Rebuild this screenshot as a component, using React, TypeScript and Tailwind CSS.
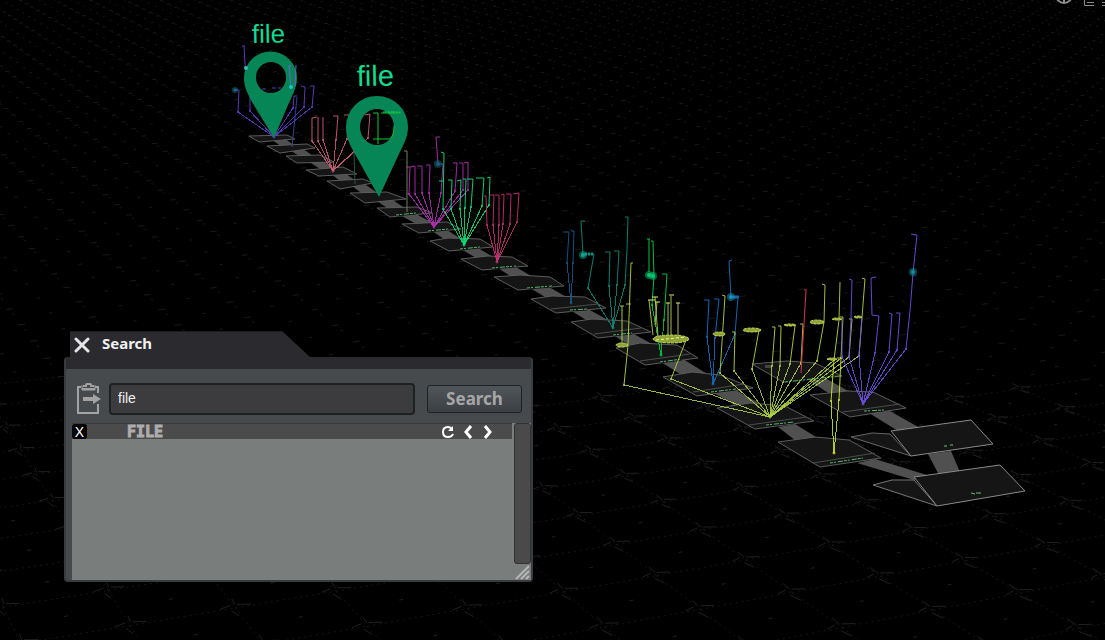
import { useState } from 'react';

type Point = [number, number];

interface Tree {
  color: string;
  root: Point;
  // each branch goes from the root outwards
  branches: Point[][];
}

interface Platform {
  points: string;
  label?: string;
}

const PLATFORMS: Platform[] = [
  { points: '249,136 287,135 295,139 259,142' },
  { points: '267,146 307,144 315,148 280,153' },
  { points: '286,156 320,155 334,162 297,163' },
  { points: '306,170 343,167 357,174 319,176' },
  { points: '327,181 363,179 373,183 340,189' },
  { points: '350,193 387,192 406,199 365,203' },
  { points: '377,208 417,207 432,213 390,217', label: 'M396,215 L416,213' },
  { points: '402,224 447,222 461,229 419,233', label: 'M428,231 L448,229' },
  { points: '430,241 448,238 480,239 493,247 449,251', label: 'M460,249 L480,247' },
  { points: '461,259 488,256 512,257 528,266 482,270', label: 'M492,268 L516,266' },
  { points: '494,277 520,275 550,277 564,286 518,290', label: 'M527,288 L552,286' },
  { points: '531,299 552,296 585,297 606,308 556,313', label: 'M570,310 L587,309' },
  { points: '571,322 592,319 627,321 651,332 598,338', label: 'M613,335 L632,333' },
  { points: '616,348 640,343 677,345 698,358 645,365', label: 'M660,362 L682,359' },
  { points: '663,377 692,372 720,375 753,388 697,396', label: 'M711,392 L736,389' },
  { points: '752,364 787,361 815,363 842,376 783,382', label: 'M785,382 L839,376' },
  { points: '717,408 750,403 785,406 814,421 755,429', label: 'M766,425 L794,422' },
  { points: '810,395 847,391 873,392 906,408 850,417', label: 'M864,411 L884,410' },
  { points: '778,442 815,437 849,440 881,458 820,467', label: 'M830,463 L863,458' },
];

const LINKS = [
  '271,139 284,138 299,149 286,150',
  '290,150 303,149 319,160 306,161',
  '308,161 321,160 340,172 326,173',
  '330,173 343,172 362,185 346,186',
  '352,186 366,185 385,198 369,199',
  '374,199 390,198 412,213 396,214',
  '400,215 416,214 444,229 427,230',
  '432,231 447,230 472,246 456,247',
  '461,249 478,248 505,264 488,265',
  '496,267 514,266 545,284 525,285',
  '530,288 549,287 582,306 562,307',
  '570,310 588,309 626,330 604,331',
  '613,335 632,333 672,355 649,357',
  '661,362 683,359 725,385 702,388',
  '714,393 734,389 785,418 762,421',
  '778,427 795,424 824,442 800,444',
  '810,381 825,378 850,392 830,394',
  '869,413 890,411 920,428 898,431',
  '857,463 875,459 930,476 914,480',
  '928,454 951,451 960,472 939,475',
];

const TREES: Tree[] = [
  {
    color: '#6140c8',
    root: [274, 137],
    branches: [
      [[238, 112], [239, 90], [234, 90]],
      [[250, 111], [250, 89]],
      [[293, 108], [294, 96], [297, 96]],
      [[304, 107], [305, 87], [301, 86]],
      [[312, 107], [314, 86], [310, 86]],
    ],
  },
  {
    color: '#cc6079',
    root: [333, 171],
    branches: [
      [[312, 141], [312, 118], [317, 117]],
      [[318, 141], [318, 117]],
      [[323, 140], [323, 117]],
      [[336, 140], [338, 116], [333, 116]],
      [[347, 139], [349, 115], [344, 115]],
      [[354, 152]],
      [[368, 138], [370, 114], [365, 115]],
    ],
  },
  {
    color: '#ae30b2',
    root: [434, 227],
    branches: [
      [[409, 194], [410, 167], [406, 167]],
      [[415, 194], [415, 166], [410, 167]],
      [[422, 193], [422, 166], [417, 166]],
      [[429, 193], [430, 165], [426, 165]],
      [[441, 193], [443, 164], [438, 164], [436, 137], [440, 137]],
      [[455, 191], [457, 163], [453, 163]],
      [[463, 190], [463, 163], [459, 163]],
      [[468, 190], [468, 162], [464, 163]],
    ],
  },
  {
    color: '#12e07a',
    root: [464, 245],
    branches: [
      [[443, 209], [444, 153], [441, 152]],
      [[451, 209], [452, 180], [448, 180]],
      [[460, 209], [461, 180], [457, 181]],
      [[465, 208], [466, 179], [463, 179]],
      [[471, 207], [473, 179], [467, 179]],
      [[482, 206], [484, 178], [476, 178]],
      [[489, 205], [490, 177], [487, 178]],
    ],
  },
  {
    color: '#c43273',
    root: [497, 262],
    branches: [
      [[487, 225], [486, 196], [484, 196]],
      [[493, 225], [494, 195], [489, 195]],
      [[499, 225], [499, 195], [495, 195]],
      [[503, 224], [504, 194], [501, 195]],
      [[510, 224], [511, 194], [506, 194]],
      [[517, 222], [519, 193], [513, 194]],
    ],
  },
  {
    color: '#17598a',
    root: [571, 303],
    branches: [
      [[567, 263], [569, 232], [563, 232]],
      [[573, 263], [574, 231], [571, 231]],
    ],
  },
  {
    color: '#0e8a78',
    root: [613, 328],
    branches: [
      [[588, 288], [594, 254], [583, 254], [581, 221], [585, 221]],
      [[609, 286], [610, 252], [605, 252]],
      [[617, 285], [619, 251], [614, 251]],
      [[625, 285], [627, 250], [628, 217], [625, 217]],
    ],
  },
  {
    color: '#00cf4a',
    root: [661, 355],
    branches: [
      [[652, 305], [654, 276], [653, 241], [651, 241]],
      [[664, 320], [667, 274], [662, 274]],
    ],
  },
  {
    color: '#1470c4',
    root: [713, 384],
    branches: [
      [[707, 337], [709, 300], [704, 300]],
      [[715, 338], [719, 299], [714, 299]],
      [[735, 334], [738, 297], [731, 297], [729, 261], [732, 260]],
    ],
  },
  {
    color: '#b0d446',
    root: [770, 417],
    branches: [
      [[624, 385], [628, 345], [631, 263], [633, 263]],
      [[671, 379], [686, 340]],
      [[720, 373], [725, 296], [722, 295]],
      [[734, 371], [735, 332], [732, 332]],
      [[752, 369], [759, 330]],
      [[772, 366], [775, 327], [772, 327]],
      [[780, 366], [781, 326], [778, 326]],
      [[790, 364], [795, 326]],
      [[801, 363], [803, 324], [800, 324]],
      [[817, 361], [824, 322], [825, 285], [822, 284]],
      [[834, 360], [839, 320], [840, 282]],
      [[841, 358], [843, 317], [840, 317]],
      [[849, 357], [852, 319], [849, 319]],
      [[859, 356], [862, 317], [865, 279], [862, 278]],
    ],
  },
  {
    color: '#d2ea26',
    root: [834, 453],
    branches: [
      [[831, 401], [834, 360], [827, 359]],
      [[839, 400], [841, 358], [837, 358]],
    ],
  },
  {
    color: '#6f50e0',
    root: [863, 404],
    branches: [
      [[842, 357], [842, 318]],
      [[849, 357], [851, 318], [852, 280], [849, 279]],
      [[859, 356], [862, 318]],
      [[875, 353], [879, 316], [872, 315], [871, 278], [876, 277]],
      [[889, 352], [892, 314], [889, 313]],
      [[897, 350], [900, 313], [896, 313]],
      [[906, 349], [910, 311], [913, 273], [917, 235], [911, 234]],
    ],
  },
];

// free standing poles, no root
const POLES = [
  { d: 'M404 151 H407 V212', color: '#71825a' },
  { d: 'M354 150 L355 184', color: '#25564a' },
  { d: 'M297 97 L292 147', color: '#343f99' },
  { d: 'M244 46 L246 80 M242 46 H245', color: '#5a3ab8' },
  { d: 'M649 239 V272 M647 239 H650', color: '#00bf45' },
  { d: 'M439 181 H444', color: '#12cc70' },
  { d: 'M622 306 V345 M620 306 H624 M626 304 H631', color: '#a2c443' },
  { d: 'M649 300 L653 335 M655 297 L658 337 M657 302 L655 325 M668 303 V341 M671 296 V337 M678 303 V339', color: '#a5bb50' },
  { d: 'M648 300 H655 M652 297 H658 M655 302 H660 M666 303 H670 M669 295 H674 M676 303 H680', color: '#d8f070' },
  { d: 'M806 291 L801 373 M804 290 H807', color: '#d73356' },
];

const DISCS = [
  { x: 622, y: 345, rx: 6, ry: 2 },
  { x: 671, y: 339, rx: 18, ry: 4 },
  { x: 719, y: 334, rx: 6, ry: 2 },
  { x: 752, y: 330, rx: 9, ry: 2 },
  { x: 790, y: 325, rx: 6, ry: 1 },
  { x: 817, y: 322, rx: 7, ry: 2 },
  { x: 837, y: 319, rx: 5, ry: 1 },
  { x: 858, y: 317, rx: 4, ry: 1 },
  { x: 832, y: 359, rx: 5, ry: 1 },
];

const SPARKS = [
  { x: 235, y: 90, r: 2, color: '#147c92' },
  { x: 438, y: 164, r: 3, color: '#176079' },
  { x: 583, y: 255, r: 3, color: '#12aa94' },
  { x: 649, y: 275, r: 3, color: '#08c771' },
  { x: 653, y: 276, r: 3, color: '#08c771' },
  { x: 731, y: 297, r: 3, color: '#1497bd' },
  { x: 913, y: 272, r: 3, color: '#138b99' },
];

// Projects a floor grid coordinate to the screen
function project(i: number, j: number): Point | null {
  const w = 1 + 0.0184 * i - 0.0372 * j;
  if (w < 0.3) return null;
  return [(832 + 99.7 * i + 15.8 * j) / w, (545 - 4.7 * i + 9.8 * j) / w];
}

function segment(a: Point | null, b: Point | null) {
  if (!a || !b) return '';
  return `M${a[0].toFixed(1)} ${a[1].toFixed(1)}L${b[0].toFixed(1)} ${b[1].toFixed(1)}`;
}

function Floor() {
  let lines = '';
  let marks = '';
  let far = '';
  for (let i = -14; i < 38; i++) {
    for (let j = -64; j < 12; j++) {
      const p = project(i, j);
      if (!p || p[0] < -90 || p[0] > 1200 || p[1] < -20 || p[1] > 700) continue;
      if (p[1] > 380) {
        lines += segment(p, project(i + 1, j)) + segment(p, project(i, j + 1));
        marks += segment(project(i - 0.14, j - 0.03), project(i - 0.03, j - 0.08));
        marks += segment(project(i + 0.04, j - 0.08), project(i + 0.16, j - 0.03));
        marks += segment(project(i - 0.05, j + 0.06), project(i - 0.02, j + 0.22));
        marks += segment(project(i + 0.03, j - 0.25), project(i + 0.02, j - 0.08));
        marks += segment(project(i + 0.48, j + 0.5), project(i + 0.52, j + 0.5));
      } else {
        far += segment(project(i - 0.04, j), project(i + 0.06, j));
        far += segment(project(i + 0.48, j + 0.5), project(i + 0.53, j + 0.5));
        far += segment(project(i, j + 0.3), project(i + 0.02, j + 0.35));
      }
    }
  }
  return (
    <g fill="none">
      <path d={lines} stroke="#161616" strokeDasharray="2 4" />
      <path d={marks} stroke="#202020" />
      <path d={far} stroke="#191919" />
    </g>
  );
}

function TreeShape({ tree }: { tree: Tree }) {
  return (
    <g stroke={tree.color} fill="none">
      {tree.branches.map((branch, index) => {
        const kink = branch[0];
        return (
          <g key={index}>
            <path d={`M${tree.root} L${kink}`} shapeRendering="crispEdges" strokeOpacity="0.85" />
            <polyline points={branch.map((p) => p.join(',')).join(' ')} strokeOpacity="0.9" />
            <circle cx={kink[0]} cy={kink[1]} r="1" fill={tree.color} stroke="none" />
          </g>
        );
      })}
      <circle cx={tree.root[0]} cy={tree.root[1]} r="1" />
    </g>
  );
}

function Scene() {
  return (
    <svg
      className="absolute inset-0 h-full w-full"
      viewBox="0 0 1105 640"
      preserveAspectRatio="xMinYMin slice"
      aria-label="File system map"
    >
      <Floor />

      <g fill="#505050">
        {LINKS.map((points) => (
          <polygon key={points} points={points} />
        ))}
      </g>

      {PLATFORMS.map(({ points, label }) => (
        <g key={points}>
          <polygon points={points} fill="#151515" stroke="#5c5c5c" />
          {label && (
            <>
              <path d={label} stroke="#151515" strokeWidth="3" />
              <path d={label} stroke="#55b66c" strokeDasharray="3 1 2 2 5 1" />
            </>
          )}
        </g>
      ))}
      <g stroke="#4c4c4c">
        <path d="M813 463 L875 453 M843 412 L900 404 M749 425 L806 417 M693 392 L744 384 M640 361 L690 354 M594 334 L641 328 M551 309 L598 304" />
      </g>

      <g fill="#151515" stroke="#8a8a8a">
        <polygon points="851,437 872,433 890,434 911,456" stroke="#666666" />
        <polygon points="891,431 971,420 993,444 911,456" />
        <polygon points="873,485 892,480 914,480 937,506" stroke="#777777" />
        <polygon points="914,477 1000,465 1025,491 937,506" />
      </g>
      <g stroke="#62c578" fill="none">
        <path d="M944 446 L947 446 M950 445 L953 445" />
        <path d="M971 493 L975 494 M976 493 L981 493" />
      </g>
      <rect x="765" y="365" width="6" height="3" fill="#444444" />

      {TREES.map((tree) => (
        <TreeShape key={tree.color} tree={tree} />
      ))}
      {POLES.map((pole) => (
        <path key={pole.d} d={pole.d} stroke={pole.color} fill="none" />
      ))}
      <g fill="#8fa336" stroke="#c5dd5a" strokeDasharray="3 1">
        {DISCS.map((disc) => (
          <ellipse key={disc.x} cx={disc.x} cy={disc.y} rx={disc.rx} ry={disc.ry} />
        ))}
      </g>
      <path d="M656 340 L686 337" stroke="#eaf7a0" strokeDasharray="3 2" />
      <path d="M585 254 H594" stroke="#12907e" strokeWidth="3" strokeDasharray="2 1" />
      <path d="M733 297 H739" stroke="#1767ae" strokeWidth="3" />
      {SPARKS.map((spark) => (
        <g key={spark.x} fill={spark.color}>
          <circle cx={spark.x} cy={spark.y} r={spark.r + 1} fillOpacity="0.5" />
          <circle cx={spark.x} cy={spark.y} r={spark.r - 1} />
        </g>
      ))}

      <g fill="#068657" fillRule="evenodd">
        <path d="M244 78 A26.5 26.5 0 0 1 297 78 C297 88 291 98 288 105 L274 138 L252 102 C248 94 244 87 244 78 Z M256 77.500 A15 15.500 0 0 0 286 77.500 A15 15.500 0 0 0 256 77.500 Z" />
        <path d="M346 127 A31 31 0 0 1 408 127 C408 138 402 147 398 156 L379 197 L355 154 C350 145 346 138 346 127 Z M360 127 A17 18 0 0 0 394 127 A17 18 0 0 0 360 127 Z" />
      </g>
      <g fill="none">
        <path d="M289 66 L291 87 M288 66 H291 M296 65 L295 86" stroke="#6a62c8" />
        <path d="M262 89 H268 M272 88 H281" stroke="#5a3ab8" strokeDasharray="4 2" />
        <path d="M378 144 L378 113 H373 M381 113 H401 M394 126 C394 134 392 139 388 139 H373" stroke="#12c42b" />
        <path d="M383 112 H400" stroke="#12d85e" strokeDasharray="4 1 2 1" />
      </g>
      <circle cx="246" cy="68" r="2" fill="#38bbba" />
      <circle cx="291" cy="87" r="2" fill="#19c6c2" />

      <g fill="#0fdc91" className="font-['Liberation_Sans',sans-serif]">
        <text x="252" y="43" fontSize="26" transform="rotate(-1 252 43)">
          file
        </text>
        <text x="357" y="86" fontSize="29" transform="rotate(-1 357 86)">
          file
        </text>
      </g>

      <g stroke="#8c8c8c" fill="none">
        <circle cx="1064" cy="-5" r="8" strokeWidth="2" />
        <path d="M1064 -4 V3" strokeWidth="2" />
        <path d="M1094 5.500 H1084.500 V0 M1094 2.500 H1087 M1105 5.500 H1102 M1105 2.500 H1102" />
      </g>
    </svg>
  );
}

function ClipboardIcon() {
  return (
    <svg viewBox="0 0 24 32" className="h-8 w-6 shrink-0" fill="none" stroke="#a3a3a3" strokeWidth="2" aria-hidden="true">
      <path d="M4 4 H1 V30 H21 V21 M18 4 H21 V10" />
      <path d="M5 2 V7 H18 V2" strokeWidth="1" />
      <path d="M5 6 H18" />
      <path d="M6 3 H9 V2 Q9 1 10 1 H13 Q14 1 14 2 V3 H17" />
      <path d="M6 16 H17" strokeWidth="4" />
      <path d="M16 11 L24 16 L16 21 Z" fill="#a3a3a3" stroke="none" />
    </svg>
  );
}

function SearchWindow() {
  const [query, setQuery] = useState('file');

  return (
    <section className="absolute left-16 top-[331px] w-[469px] font-['Noto_Sans','Open_Sans',sans-serif]">
      <header className="ml-[6px] flex h-[26px] w-60 items-center gap-3 border-t border-[#1c1c1e] bg-[#2b2b2f] pl-1 [clip-path:polygon(0_0,212px_0,100%_100%,0_100%)]">
        <button type="button" aria-label="Close" className="text-[#e4e4e4]">
          <svg viewBox="0 0 16 16" className="size-4" stroke="currentColor" strokeWidth="3" strokeLinecap="round">
            <path d="M2 2 L14 14 M14 2 L2 14" />
          </svg>
        </button>
        <h2 className="pb-[3px] text-[15px] font-bold leading-5 text-[#f0f0f0]">Search</h2>
      </header>

      <div className="rounded-b-sm rounded-t-sm border-2 border-t-0 border-[#393c3e] bg-[#464a4c]">
        <div className="h-3 bg-[#2b2b2f]" />
        <form
          className="flex items-center gap-3 pb-2 pl-[11px] pr-[9px] pt-[14px]"
          onSubmit={(event) => event.preventDefault()}
        >
          <div className="flex flex-1 items-center gap-2">
            <ClipboardIcon />
            <input
              type="text"
              aria-label="Search text"
              value={query}
              onChange={(event) => setQuery(event.target.value)}
              className="h-8 min-w-0 flex-1 rounded border-2 border-[#1f2021] bg-[#3c3c3e] px-[7px] pb-[2px] font-['Liberation_Sans',sans-serif] text-sm text-[#eeeeee] outline-none"
            />
          </div>
          <button
            type="submit"
            className="h-7 w-[95px] rounded-[3px] border border-[#1e2022] bg-linear-to-b from-[#50555a] to-[#3c4045] text-[17px] font-bold leading-5 text-[#a6a6a6]"
          >
            Search
          </button>
        </form>

        <div className="flex pl-[6px]">
          <div className="min-w-0 flex-1 bg-[#797d7c]">
            <div className="mr-[2px] flex h-4 items-center border-t border-[#3a3d3e] bg-[#4a4b4a]">
              <button
                type="button"
                aria-label="Remove result"
                className="flex h-[15px] w-[15px] items-center justify-center rounded-[3px] bg-black font-['Liberation_Sans',sans-serif] text-sm leading-none text-white"
              >
                X
              </button>
              <span className="ml-10 flex-1 font-['DejaVu_Sans_Mono',monospace] text-[15px] font-bold leading-4 text-[#adadad] [-webkit-text-stroke:1px_#adadad]">
                FILE
              </span>
              <div className="mr-[17px] flex gap-[6px] text-white">
                <button type="button" aria-label="Refresh">
                  <svg viewBox="0 0 14 14" className="size-[14px]" fill="none" stroke="currentColor" strokeWidth="2">
                    <path d="M11 4 Q9 2 7 2 Q2 2 2 7 Q2 12 7 12 Q11 12 12 9" />
                    <path d="M12 1 V6 H7 Z" fill="currentColor" stroke="none" />
                  </svg>
                </button>
                <button type="button" aria-label="Previous">
                  <svg viewBox="0 0 14 14" className="size-[14px]" fill="none" stroke="currentColor" strokeWidth="3">
                    <path d="M10 1 L5 7 L10 13" />
                  </svg>
                </button>
                <button type="button" aria-label="Next">
                  <svg viewBox="0 0 14 14" className="size-[14px]" fill="none" stroke="currentColor" strokeWidth="3">
                    <path d="M4 1 L9 7 L4 13" />
                  </svg>
                </button>
              </div>
            </div>
            <div className="h-[141px]" />
          </div>
          <div className="flex w-[17px] flex-col bg-[#797d7c]">
            <div className="flex-1 rounded-[3px] border border-[#303131] bg-[#4a4a4a]" />
            <svg viewBox="0 0 16 16" className="size-4" stroke="#b4b6b6" strokeWidth="2" aria-hidden="true">
              <path d="M2 15 L15 2 M7 15 L15 7 M12 15 L15 12" />
            </svg>
          </div>
        </div>
      </div>
    </section>
  );
}

export default function App() {
  return (
    <main className="relative min-h-screen overflow-hidden bg-black">
      <Scene />
      <SearchWindow />
    </main>
  );
}
